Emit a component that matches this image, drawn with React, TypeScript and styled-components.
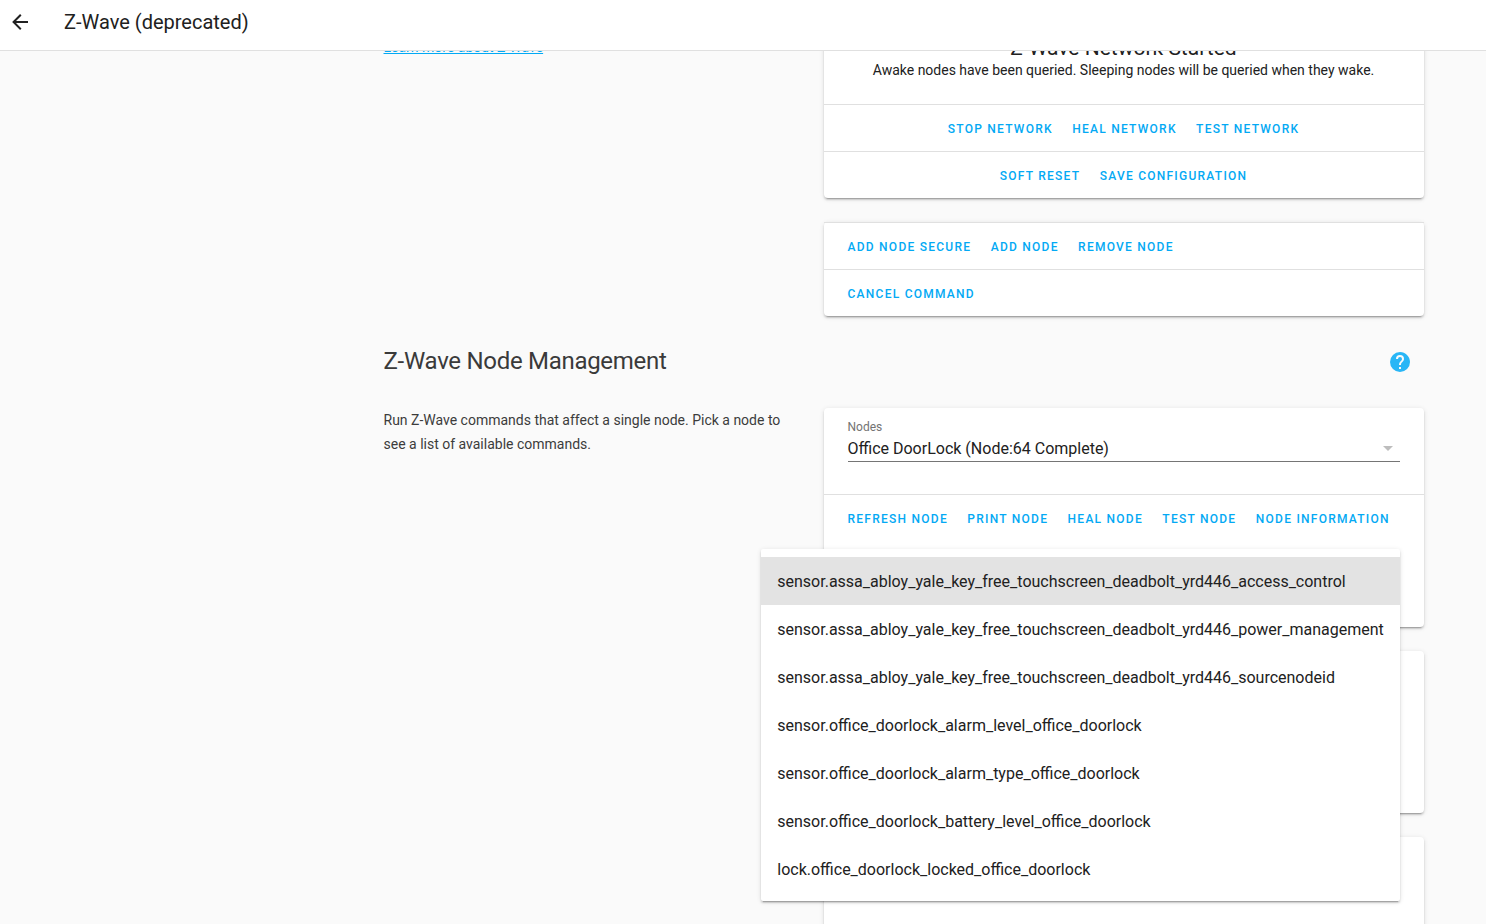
import styled, { createGlobalStyle } from 'styled-components'

const blue = '#03a9f4'

const GlobalStyle = createGlobalStyle`
    html, body {
        margin: 0;
        height: 100%;
        overflow: hidden;
        background: #fafafa;
        font-family: Roboto, "Liberation Sans", sans-serif;
        color: #212121;
    }
`

const Page = styled.div`
    position: relative;
    width: 1486px;
    height: 924px;
    overflow: hidden;
`

const Toolbar = styled.header`
    position: relative;
    z-index: 2;
    height: 50px;
    background: #fff;
    border-bottom: 1px solid #e0e0e0;
`

const ToolbarRow = styled.div`
    height: 44px;
    display: flex;
    align-items: center;
`

const BackButton = styled.button`
    width: 40px;
    height: 40px;
    margin: 0 24px 0 0;
    padding: 0;
    border: 0;
    background: none;
    display: flex;
    align-items: center;
    justify-content: center;
    color: #212121;
`

const ToolbarTitle = styled.div`
    font-size: 20px;
`

const Viewport = styled.main`
    height: 873px;
    overflow: hidden;
`

const Content = styled.div`
    margin-top: -31px;
    padding: 0 62.5px 0 383.5px;
`

const Section = styled.section`
    display: grid;
    grid-template-columns: 416px 600px;
    column-gap: 24px;
`

const SideText = styled.div<{ $top: number }>`
    padding-top: ${p => p.$top}px;
    font-size: 14px;
    line-height: 24px;
    color: #3c3c3c;
`

const LearnLink = styled.a`
    color: ${blue};
    text-decoration: underline;
`

const CardStack = styled.div`
    display: flex;
    flex-direction: column;
    gap: 24px;
`

const Card = styled.div<{ $height?: number }>`
    background: #fff;
    border-radius: 4px;
    min-height: ${p => (p.$height ? `${p.$height}px` : '0')};
    box-sizing: border-box;
    box-shadow: 0 2px 2px 0 rgba(0, 0, 0, 0.14), 0 1px 5px 0 rgba(0, 0, 0, 0.12),
        0 3px 1px -2px rgba(0, 0, 0, 0.2);
`

const StatusBody = styled.div`
    padding: 16px 16px 24px;
    text-align: center;
`

const StatusTitle = styled.div`
    font-size: 21px;
    line-height: 24px;
`

const StatusText = styled.div`
    font-size: 14px;
    line-height: 20px;
`

const Actions = styled.div<{ $center?: boolean }>`
    display: flex;
    justify-content: ${p => (p.$center ? 'center' : 'flex-start')};
    gap: 3.4px;
    padding: 5px 16px;
    border-top: 1px solid #e0e0e0;
`

const ActionButton = styled.button`
    height: 36px;
    padding: 2px 8px 0;
    border: 0;
    background: none;
    font-family: inherit;
    font-size: 12px;
    font-weight: 500;
    letter-spacing: 1.25px;
    text-transform: uppercase;
    color: ${blue};
`

const SectionHeader = styled.div`
    display: flex;
    align-items: center;
    justify-content: space-between;
    margin: 29px 0 31px;
    padding-right: 12px;
`

const Heading = styled.h2`
    margin: 0;
    font-size: 24px;
    font-weight: 400;
    line-height: 32px;
    letter-spacing: -0.012em;
    color: #3a3a3a;
`

const HelpIcon = styled.svg`
    margin-top: 2px;
    fill: #29b6f6;
`

const SelectField = styled.div`
    padding: 12px 24px 32px;
`

const SelectLabel = styled.div`
    font-size: 12px;
    line-height: 14px;
    color: #737373;
`

const SelectValue = styled.div`
    display: flex;
    align-items: center;
    justify-content: space-between;
    height: 25px;
    margin-top: 2px;
    font-size: 16px;
    border-bottom: 1px solid #757575;
`

const SelectArrow = styled.svg`
    margin-bottom: 1px;
    fill: #bdbdbd;
`

const Menu = styled.ul`
    position: absolute;
    z-index: 1;
    left: 761px;
    top: 549px;
    width: 639px;
    margin: 0;
    padding: 8px 0 8px;
    box-sizing: border-box;
    list-style: none;
    background: #fff;
    border-radius: 2px;
    box-shadow: 0 2px 2px 0 rgba(0, 0, 0, 0.14), 0 1px 5px 0 rgba(0, 0, 0, 0.12),
        0 3px 1px -2px rgba(0, 0, 0, 0.2);
`

const MenuItem = styled.li<{ $active?: boolean }>`
    height: 48px;
    padding-left: 16.25px;
    display: flex;
    align-items: center;
    font-size: 16px;
    white-space: nowrap;
    background: ${p => (p.$active ? '#e3e3e3' : 'transparent')};
`

const entities = [
    'sensor.assa_abloy_yale_key_free_touchscreen_deadbolt_yrd446_access_control',
    'sensor.assa_abloy_yale_key_free_touchscreen_deadbolt_yrd446_power_management',
    'sensor.assa_abloy_yale_key_free_touchscreen_deadbolt_yrd446_sourcenodeid',
    'sensor.office_doorlock_alarm_level_office_doorlock',
    'sensor.office_doorlock_alarm_type_office_doorlock',
    'sensor.office_doorlock_battery_level_office_doorlock',
    'lock.office_doorlock_locked_office_doorlock',
]

function ActionRow({ labels, center }: { labels: string[]; center?: boolean }) {
    return (
        <Actions $center={center}>
            {labels.map(label => (
                <ActionButton key={label}>{label}</ActionButton>
            ))}
        </Actions>
    )
}

export default function App() {
    return (
        <Page>
            <GlobalStyle />
            <Toolbar>
                <ToolbarRow>
                    <BackButton>
                        <svg width="24" height="24" viewBox="0 0 24 24" fill="currentColor">
                            <path d="M20 11v2H8l5.5 5.5-1.42 1.42L4.16 12l7.92-7.92L13.5 5.5 8 11h12z" />
                        </svg>
                    </BackButton>
                    <ToolbarTitle>Z-Wave (deprecated)</ToolbarTitle>
                </ToolbarRow>
            </Toolbar>
            <Viewport>
                <Content>
                    <Section>
                        <SideText $top={15}>
                            <LearnLink>Learn more about Z-Wave</LearnLink>
                        </SideText>
                        <CardStack>
                            <Card>
                                <StatusBody>
                                    <StatusTitle>Z-Wave Network Started</StatusTitle>
                                    <StatusText>
                                        Awake nodes have been queried. Sleeping nodes will be queried when they wake.
                                    </StatusText>
                                </StatusBody>
                                <ActionRow center labels={['Stop Network', 'Heal Network', 'Test Network']} />
                                <ActionRow center labels={['Soft Reset', 'Save Configuration']} />
                            </Card>
                            <Card>
                                <ActionRow labels={['Add Node Secure', 'Add Node', 'Remove Node']} />
                                <ActionRow labels={['Cancel Command']} />
                            </Card>
                        </CardStack>
                    </Section>
                    <SectionHeader>
                        <Heading>Z-Wave Node Management</Heading>
                        <HelpIcon width="24" height="24" viewBox="0 0 24 24">
                            <path d="M15.07 11.25l-.9.92C13.45 12.89 13 13.5 13 15h-2v-.5c0-1.11.45-2.11 1.17-2.83l1.24-1.26c.37-.36.59-.86.59-1.41a2 2 0 0 0-2-2 2 2 0 0 0-2 2H8a4 4 0 0 1 4-4 4 4 0 0 1 4 4c0 .88-.36 1.67-.93 2.25M13 19h-2v-2h2M12 2A10 10 0 0 0 2 12a10 10 0 0 0 10 10 10 10 0 0 0 10-10c0-5.53-4.5-10-10-10z" />
                        </HelpIcon>
                    </SectionHeader>
                    <Section>
                        <SideText $top={0}>
                            Run Z-Wave commands that affect a single node. Pick a node to see a list of available commands.
                        </SideText>
                        <CardStack>
                            <Card $height={219}>
                                <SelectField>
                                    <SelectLabel>Nodes</SelectLabel>
                                    <SelectValue>
                                        Office DoorLock (Node:64 Complete)
                                        <SelectArrow width="24" height="24" viewBox="0 0 24 24">
                                            <path d="M7 10l5 5 5-5z" />
                                        </SelectArrow>
                                    </SelectValue>
                                </SelectField>
                                <ActionRow
                                    labels={['Refresh Node', 'Print Node', 'Heal Node', 'Test Node', 'Node Information']}
                                />
                            </Card>
                            <Card $height={162} />
                            <Card $height={200} />
                        </CardStack>
                    </Section>
                </Content>
            </Viewport>
            <Menu>
                {entities.map((entity, i) => (
                    <MenuItem key={entity} $active={i === 0}>
                        {entity}
                    </MenuItem>
                ))}
            </Menu>
        </Page>
    )
}
